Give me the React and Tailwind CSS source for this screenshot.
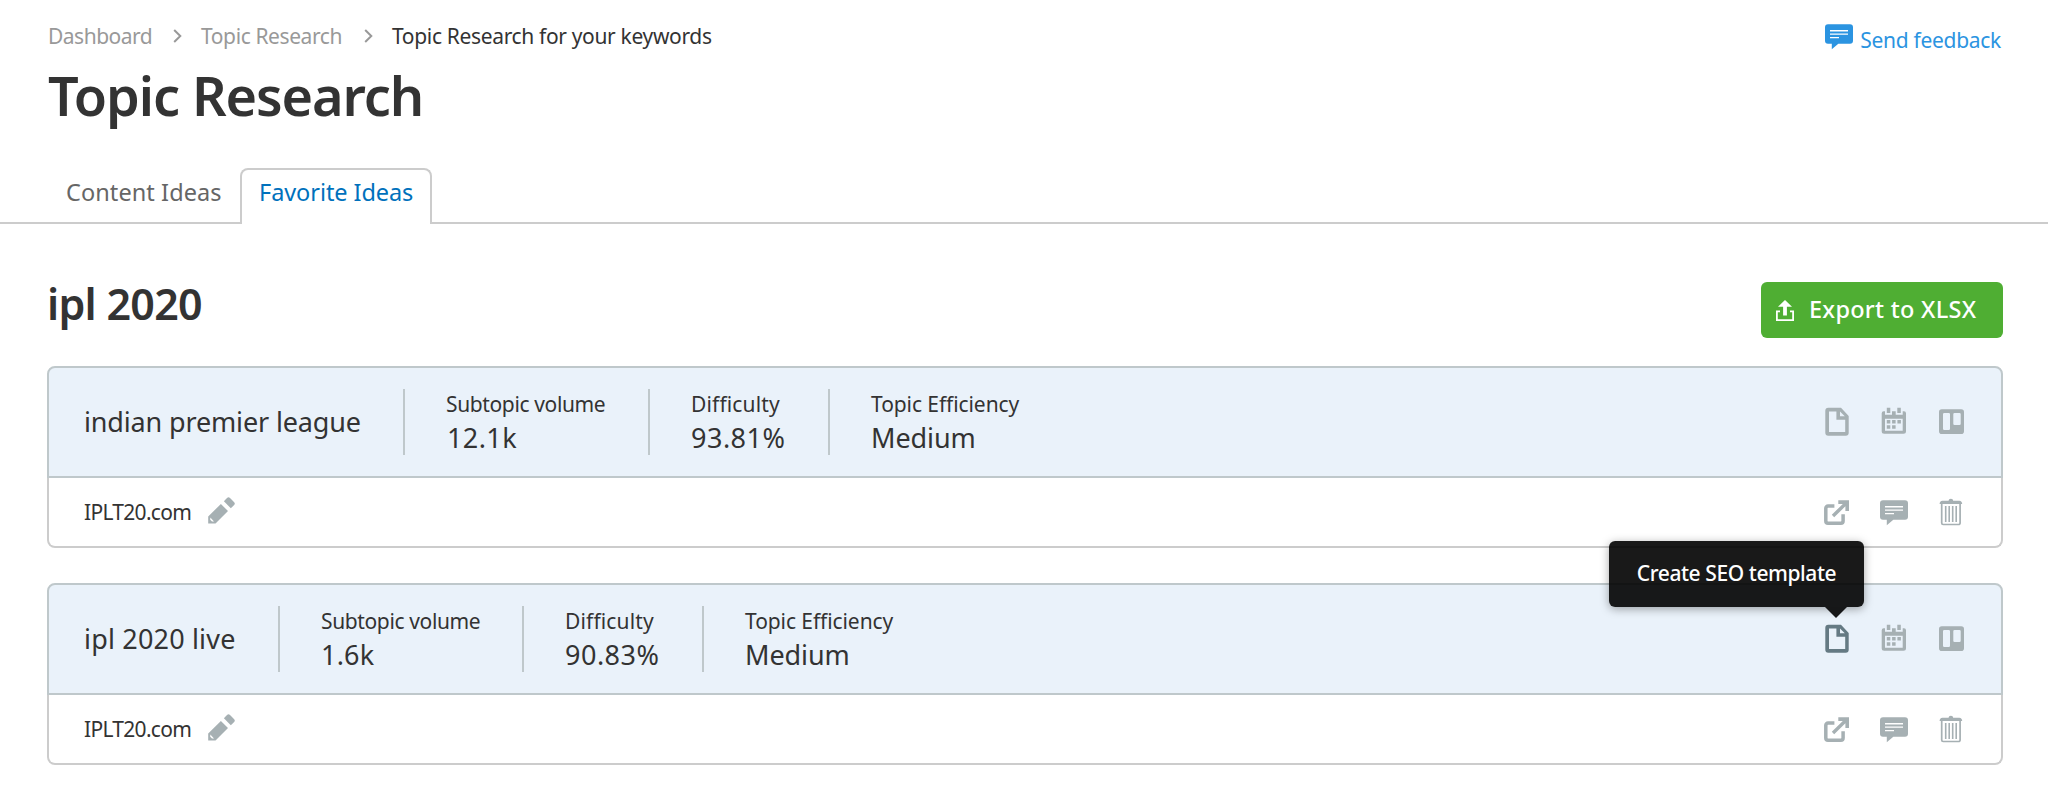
const topics = [
  {
    name: "indian premier league",
    nameClass: "w-[319px] tracking-[-0.15px]",
    volume: "12.1k",
    volumeTextClass: "pl-px tracking-[0.4px]",
    volumeClass: "w-[245px]",
    difficulty: "93.81%",
    efficiency: "Medium",
    site: "IPLT20.com",
  },
  {
    name: "ipl 2020 live",
    nameClass: "w-[194px] tracking-[0.18px]",
    volume: "1.6k",
    volumeTextClass: "tracking-[0.2px]",
    volumeClass: "w-[244px]",
    difficulty: "90.83%",
    efficiency: "Medium",
    site: "IPLT20.com",
    tooltip: "Create SEO template",
  },
];

function Icon({ children, className = "" }) {
  return (
    <svg viewBox="0 0 30 30" fill="currentColor" className={`size-[30px] shrink-0 ${className}`}>
      {children}
    </svg>
  );
}

function FileIcon({ className }) {
  return (
    <Icon className={className}>
      <path
        fillRule="evenodd"
        d="M6.3 .7H19L26.7 9V25.7a3 3 0 0 1-3 3H6.3a3 3 0 0 1-3-3V3.7a3 3 0 0 1 3-3ZM7 4.5V25H23.2V12.8H14.4V4.5ZM18 4.5V9.2H22.8Z"
      />
    </Icon>
  );
}

function CalendarIcon() {
  return (
    <Icon>
      <path
        fillRule="evenodd"
        d="M4.7 4.3H6V7.7H13V4.3H16.7V7.7H23.7V4.3H25a2 2 0 0 1 2 2V24.2a2.5 2.5 0 0 1-2.5 2.5H5.2a2.5 2.5 0 0 1-2.5-2.5V6.3a2 2 0 0 1 2-2ZM6 11.7V23.7H23.7V11.7Z"
      />
      <path d="M7.8 .7h3.5v5.3h-3.5zM18.3 .7h3.5v5.3h-3.5zM7.8 13h3.5v3.4h-3.5zM13.1 13h3.5v3.4h-3.5zM18.4 13h3.5v3.4h-3.5zM7.8 18.3h3.5v3.4h-3.5zM13.1 18.3h3.5v3.4h-3.5z" />
    </Icon>
  );
}

function BoardIcon() {
  return (
    <Icon>
      <path
        fillRule="evenodd"
        d="M5.8 2.3H25.2a2.8 2.8 0 0 1 2.8 2.8V24.2a2.8 2.8 0 0 1-2.8 2.8H5.8a2.8 2.8 0 0 1-2.8-2.8V5.1a2.8 2.8 0 0 1 2.8-2.8ZM8.2 6A1.2 1.2 0 0 0 7 7.2V21.8A1.2 1.2 0 0 0 8.2 23H12.8A1.2 1.2 0 0 0 14 21.8V7.2A1.2 1.2 0 0 0 12.8 6ZM18.5 6A1.2 1.2 0 0 0 17.3 7.2V16.8A1.2 1.2 0 0 0 18.5 18H23.5A1.2 1.2 0 0 0 24.7 16.8V7.2A1.2 1.2 0 0 0 23.5 6Z"
      />
    </Icon>
  );
}

function ExternalIcon() {
  return (
    <Icon>
      <path d="M12.4 9H6a2.2 2.2 0 0 0-2.2 2.2V24a2.2 2.2 0 0 0 2.2 2.2H18.9a2.2 2.2 0 0 0 2.2-2.2V17.2" fill="none" stroke="currentColor" strokeWidth="3.5" />
      <path d="M16.3 3.3H27V14H23.4V9.3L12.2 20.2L9.8 17.8L20.8 6.9H16.3Z" />
    </Icon>
  );
}

function CommentIcon() {
  return (
    <Icon>
      <path
        fillRule="evenodd"
        d="M4 3.3H26a3 3 0 0 1 3 3V19.7a3 3 0 0 1-3 3H14.3L7.8 28.2V22.7H4a3 3 0 0 1-3-3V6.3a3 3 0 0 1 3-3ZM6 9V10.4H24V9ZM6 12.4V13.8H24V12.4ZM6 15.9V17.3H15V15.9Z"
      />
    </Icon>
  );
}

function TrashIcon() {
  return (
    <Icon>
      <path d="M3.6 6.9C3.6 5 4.6 3.7 6.4 3.7H12.6C12.8 2.4 13.4 1.7 14.9 1.7S17 2.4 17.2 3.7H23.3C25.1 3.7 26.2 5 26.2 6.9Z" />
      <path d="M5.7 6.5V26a1.5 1.5 0 0 0 1.5 1.5H22.6a1.5 1.5 0 0 0 1.5-1.5V6.5" fill="none" stroke="currentColor" strokeWidth="1.7" />
      <path d="M9.7 9V25M13.2 9V25M16.7 9V25M20.2 9V25" stroke="currentColor" strokeWidth="1.6" />
    </Icon>
  );
}

function PencilIcon() {
  return (
    <svg viewBox="0 0 27 27" fill="currentColor" className="mb-[3px] size-[27px] text-[#a6b0b3]">
      <path fillRule="evenodd" d="M12.9 7L20 14L7.5 26.4H.2V19.4ZM2.4 20.6L2.2 22.8L4 24.6L6 24.4Z" />
      <path d="M15.9 4.3L19 1Q20.5-.4 22 1L26.2 5.2Q27.4 6.6 26.2 8L22.8 11.2Z" />
    </svg>
  );
}

function Chevron() {
  return (
    <svg viewBox="0 0 9 14" className="mr-[19px] h-[14px] w-[9px]" fill="none" stroke="#999" strokeWidth="2">
      <path d="M1.2 1L7.3 7L1.2 13" />
    </svg>
  );
}

function Metric({ label, value, className, labelClass = "", valueClass = "" }) {
  return (
    <div className={`h-[66px] border-l-2 border-[#bfc8cb] pl-[41px] whitespace-nowrap ${className}`}>
      <div className={`text-[21px] leading-[30px] ${labelClass}`}>{label}</div>
      <div className={`text-[27px] leading-[38px] ${valueClass}`}>{value}</div>
    </div>
  );
}

function Tooltip({ text }) {
  return (
    <div className="absolute top-[-83px] left-[-213px] z-10 flex h-[66px] w-[255px] items-center justify-center rounded-md bg-black/90 text-[21px] font-medium tracking-[-0.42px] whitespace-nowrap text-white shadow-[0_2px_10px_rgba(0,0,0,0.35)]">
      {text}
      <svg viewBox="0 0 22 11" className="absolute top-full left-[216px] h-[11px] w-[22px]">
        <path d="M0 0H22L11 11Z" fill="#161718" />
      </svg>
    </div>
  );
}

function TopicCard({ topic }) {
  return (
    <section className="h-[182px]">
      <div className="flex h-[112px] items-center rounded-t-lg border-2 border-[#bfc8cb] bg-[#eaf2fa] pr-[35px] pl-[35px]">
        <div className={`text-[27px] leading-[66px] whitespace-nowrap ${topic.nameClass}`}>{topic.name}</div>
        <Metric label="Subtopic volume" value={topic.volume} className={topic.volumeClass} labelClass="tracking-[-0.37px]" valueClass={topic.volumeTextClass} />
        <Metric label="Difficulty" value={topic.difficulty} className="w-[180px]" labelClass="tracking-[0.15px]" valueClass="tracking-[0.5px]" />
        <Metric label="Topic Efficiency" value={topic.efficiency} className="w-[220px]" labelClass="tracking-[-0.08px]" valueClass="tracking-[-0.1px]" />
        <div className="ml-auto flex gap-[27px] text-[#a6b0b3]">
          <div className="relative">
            <FileIcon className={topic.tooltip ? "text-[#657a83]" : ""} />
            {topic.tooltip && <Tooltip text={topic.tooltip} />}
          </div>
          <CalendarIcon />
          <BoardIcon />
        </div>
      </div>
      <div className="flex h-[70px] items-center rounded-b-lg border-2 border-t-0 border-[#ccc] pr-[35px] pl-[35px]">
        <div className="w-[124px] text-[21px] leading-8 tracking-[-0.7px]">{topic.site}</div>
        <PencilIcon />
        <div className="ml-auto flex gap-[27px] text-[#a6b0b3]">
          <ExternalIcon />
          <CommentIcon />
          <TrashIcon />
        </div>
      </div>
    </section>
  );
}

export default function App() {
  return (
    <div className="h-[805px] w-[2048px] overflow-hidden bg-white font-['Noto_Sans',sans-serif] text-[#333]">
      <header className="flex h-[168px] items-start justify-between pr-[47px] pl-[48px]">
        <div className="pt-[20px]">
          <nav className="flex h-8 items-center text-[21px] leading-8 whitespace-nowrap">
            <span className="w-[125px] tracking-[-0.5px] text-[#999]">Dashboard</span>
            <Chevron />
            <span className="w-[163px] tracking-[-0.4px] text-[#999]">Topic Research</span>
            <Chevron />
            <span className="tracking-[-0.34px]">Topic Research for your keywords</span>
          </nav>
          <h1 className="mt-[11px] text-[54px] leading-[64px] font-semibold tracking-[-1.1px]">Topic Research</h1>
        </div>
        <a className="flex items-start gap-[6px] pt-[21px] text-[#2b94e1]">
          <CommentIcon />
          <span className="mt-[3px] text-[21px] leading-8 tracking-[-0.3px] whitespace-nowrap">Send feedback</span>
        </a>
      </header>

      <div className="flex h-14 text-[23.5px] leading-[44px] whitespace-nowrap">
        <div className="w-[240px] border-b-2 border-[#ccc] pt-[2px] pl-[66px] tracking-[0.08px] text-[#666]">Content Ideas</div>
        <div className="w-[192px] rounded-t-lg border-2 border-b-0 border-[#ccc] pl-[17px] tracking-[-0.07px] text-[#0071bc]">Favorite Ideas</div>
        <div className="flex-1 border-b-2 border-[#ccc]" />
      </div>

      <main className="pt-[52px] pr-[45px] pl-[47px]">
        <div className="flex items-start justify-between">
          <h2 className="text-[43px] leading-[56px] font-semibold tracking-[-0.75px]">ipl 2020</h2>
          <button className="mt-[6px] flex h-14 w-[242px] items-center gap-[15px] rounded-md bg-[#4fae33] pl-[15px] text-white">
            <svg viewBox="0 0 18 21" className="h-[21px] w-[18px] shrink-0">
              <path d="M4 11.3H.9V20.1H17.1V11.3H14" fill="none" stroke="currentColor" strokeWidth="1.8" />
              <path d="M9 0L16 6.7H10.9V15.5H7.1V6.7H2Z" fill="currentColor" />
            </svg>
            <span className="text-[23.5px] font-medium tracking-[0.27px] whitespace-nowrap">Export to XLSX</span>
          </button>
        </div>
        <div className="mt-7 flex flex-col gap-[35px]">
          {topics.map((topic) => (
            <TopicCard key={topic.name} topic={topic} />
          ))}
        </div>
      </main>
    </div>
  );
}
